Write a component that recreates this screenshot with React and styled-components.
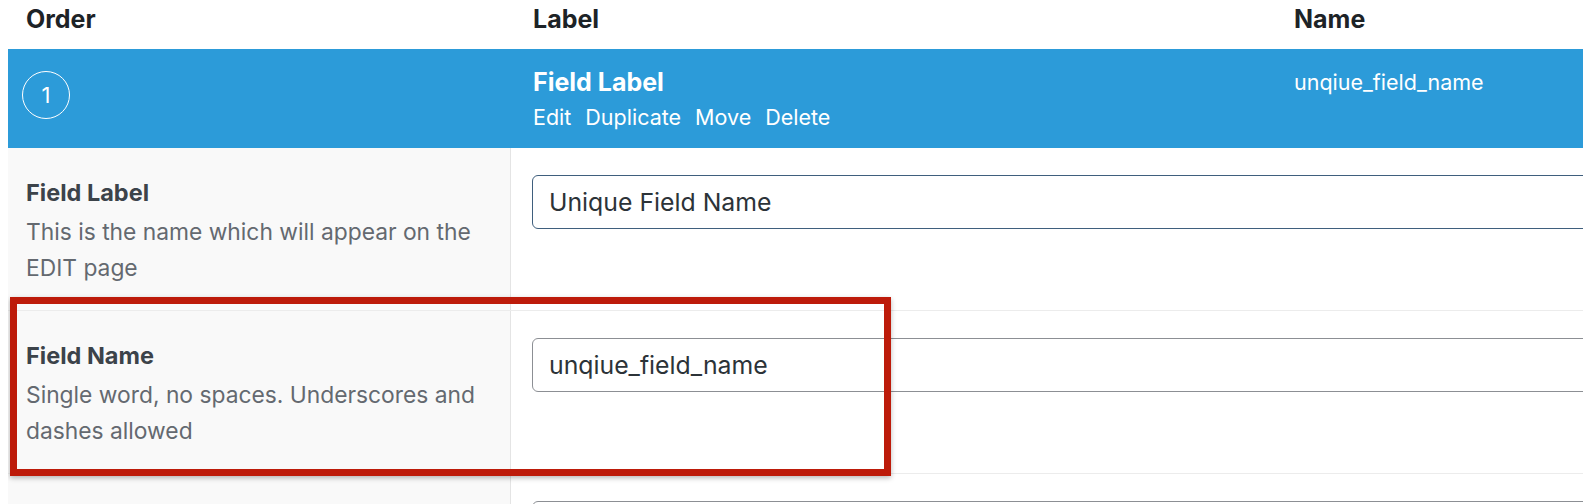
import React from "react";
import styled, { createGlobalStyle } from "styled-components";

const GlobalStyle = createGlobalStyle`
  html, body {
    margin: 0;
    padding: 0;
    background: #ffffff;
    overflow: hidden;
  }
  body {
    margin-left: 8px;
    font-family: Inter, "Noto Sans", "Liberation Sans", sans-serif;
    color: #1d2327;
  }
`;

const Page = styled.div`
  position: relative;
  width: 100%;
  height: 504px;
  overflow: hidden;
`;

const HeadRow = styled.div`
  display: grid;
  grid-template-columns: 503px 761px 1fr;
  height: 49px;
`;

const HeadCell = styled.div`
  padding: 5px 0 0 ${(p) => p.$pad || 22}px;
  font-size: 25px;
  line-height: 28px;
  font-weight: 700;
  color: #1d2327;
`;

const FieldBar = styled.div`
  display: grid;
  grid-template-columns: 503px 761px 1fr;
  height: 99px;
  background: #2c9bd9;
  color: #ffffff;
`;

const OrderCell = styled.div`
  padding: 22px 0 0 14px;
`;

const OrderBadge = styled.div`
  width: 48px;
  height: 48px;
  box-sizing: border-box;
  border: 1.5px solid #ffffff;
  border-radius: 50%;
  display: flex;
  align-items: center;
  justify-content: center;
  font-size: 22px;
`;

const LabelCell = styled.div`
  padding: 19px 0 0 22px;
`;

const BarTitle = styled.div`
  font-size: 25px;
  font-weight: 700;
  line-height: 28px;
`;

const Actions = styled.div`
  display: flex;
  gap: 14px;
  margin-top: 7px;
  font-size: 21.5px;
  line-height: 28px;
`;

const NameCell = styled.div`
  padding: 19px 0 0 22px;
  font-size: 21.5px;
  line-height: 28px;
`;

const SettingRow = styled.div`
  display: grid;
  grid-template-columns: 503px 1fr;
  height: 163px;
  box-sizing: border-box;
  border-bottom: 1px solid #ececec;
`;

const SettingLabel = styled.div`
  background: #f9f9f9;
  border-right: 1px solid #e4e4e4;
  padding: 27px 20px 0 18px;
`;

const SettingTitle = styled.div`
  font-size: 23.5px;
  font-weight: 700;
  line-height: 35px;
  margin-bottom: 4px;
  color: #3c434a;
`;

const SettingHint = styled.div`
  font-size: 22.8px;
  line-height: 35.5px;
  color: #646970;
`;

const SettingInput = styled.div`
  padding: 27px 0 0 21px;
  overflow: hidden;
`;

const TextInput = styled.input`
  display: block;
  width: 1200px;
  height: 54px;
  box-sizing: border-box;
  border: 1px solid ${(p) => (p.$focus ? "#3f5f7d" : "#8c8f94")};
  border-radius: 6px;
  padding: 0 16px;
  font-family: Inter, "Noto Sans", "Liberation Sans", sans-serif;
  font-size: 24.8px;
  color: #2c3338;
  background: #ffffff;
  outline: none;
`;

const Highlight = styled.div`
  position: absolute;
  left: 2px;
  top: 297px;
  width: 881px;
  height: 179px;
  box-sizing: border-box;
  border: 7px solid #bd1b0a;
  box-shadow: 0 2px 5px rgba(0, 0, 0, 0.28);
  pointer-events: none;
`;

const settings = [
  {
    title: "Field Label",
    hint: "This is the name which will appear on the EDIT page",
    value: "Unique Field Name",
    focus: true,
  },
  {
    title: "Field Name",
    hint: "Single word, no spaces. Underscores and dashes allowed",
    value: "unqiue_field_name",
  },
  { title: "", hint: "", value: "" },
];

export default function App() {
  return (
    <Page>
      <GlobalStyle />
      <HeadRow>
        <HeadCell $pad={18}>Order</HeadCell>
        <HeadCell>Label</HeadCell>
        <HeadCell>Name</HeadCell>
      </HeadRow>
      <FieldBar>
        <OrderCell>
          <OrderBadge>1</OrderBadge>
        </OrderCell>
        <LabelCell>
          <BarTitle>Field Label</BarTitle>
          <Actions>
            <span>Edit</span>
            <span>Duplicate</span>
            <span>Move</span>
            <span>Delete</span>
          </Actions>
        </LabelCell>
        <NameCell>unqiue_field_name</NameCell>
      </FieldBar>
      {settings.map((s, i) => (
        <SettingRow key={i}>
          <SettingLabel>
            <SettingTitle>{s.title}</SettingTitle>
            <SettingHint>{s.hint}</SettingHint>
          </SettingLabel>
          <SettingInput>
            <TextInput $focus={s.focus} defaultValue={s.value} readOnly />
          </SettingInput>
        </SettingRow>
      ))}
      <Highlight />
    </Page>
  );
}
